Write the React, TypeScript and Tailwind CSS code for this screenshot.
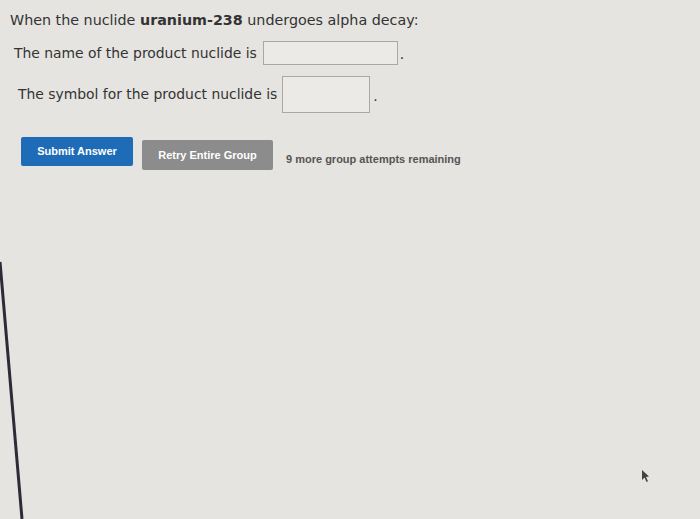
import React from 'react';

const App: React.FC = () => {
  return (
    <div className="relative w-[700px] h-[519px] overflow-hidden bg-[#e5e4e0] text-[#333] font-['DejaVu_Sans',Verdana,sans-serif]">
      <div className="pt-[10px] pl-[10px]">
        <p className="text-[14.3px] leading-[20px]">
          When the nuclide <span className="font-bold">uranium-238</span> undergoes alpha decay:
        </p>

        <div className="mt-[11px] ml-[4px] flex items-center text-[13.9px]">
          <span>The name of the product nuclide is</span>
          <span className="ml-[6px] inline-block w-[135px] h-[24px] border border-[#a9a8a4] bg-[#ebeae7]" />
          <span className="ml-[2px] self-end">.</span>
        </div>

        <div className="mt-[11px] ml-[8px] flex items-center text-[13.9px]">
          <span>The symbol for the product nuclide is</span>
          <span className="ml-[5px] inline-block w-[88px] h-[37px] border border-[#a9a8a4] bg-[#ebeae7]" />
          <span className="ml-[3px] self-end mb-[6px]">.</span>
        </div>

        <div className="mt-[24px] ml-[11px] flex items-start font-['Liberation_Sans',Arial,sans-serif] font-bold text-[11px]">
          <button type="button" className="w-[112px] h-[29px] rounded-[2px] bg-[#1e6cb8] text-white">
            Submit Answer
          </button>
          <button type="button" className="ml-[9px] mt-[3px] w-[131px] h-[30px] rounded-[2px] bg-[#8c8c8c] text-white">
            Retry Entire Group
          </button>
          <span className="ml-[13px] mt-[14px] text-[#555]">9 more group attempts remaining</span>
        </div>
      </div>

      <svg className="absolute left-0 top-0" width="700" height="519" viewBox="0 0 700 519">
        <line x1="0" y1="262" x2="22" y2="519" stroke="#2c2b38" strokeWidth="3" />
        <path d="M642 470 L642 480 L644.5 477.5 L646.5 482 L648 481.2 L646 477 L649 476.5 Z" fill="#444" />
      </svg>
    </div>
  );
};

export default App;
